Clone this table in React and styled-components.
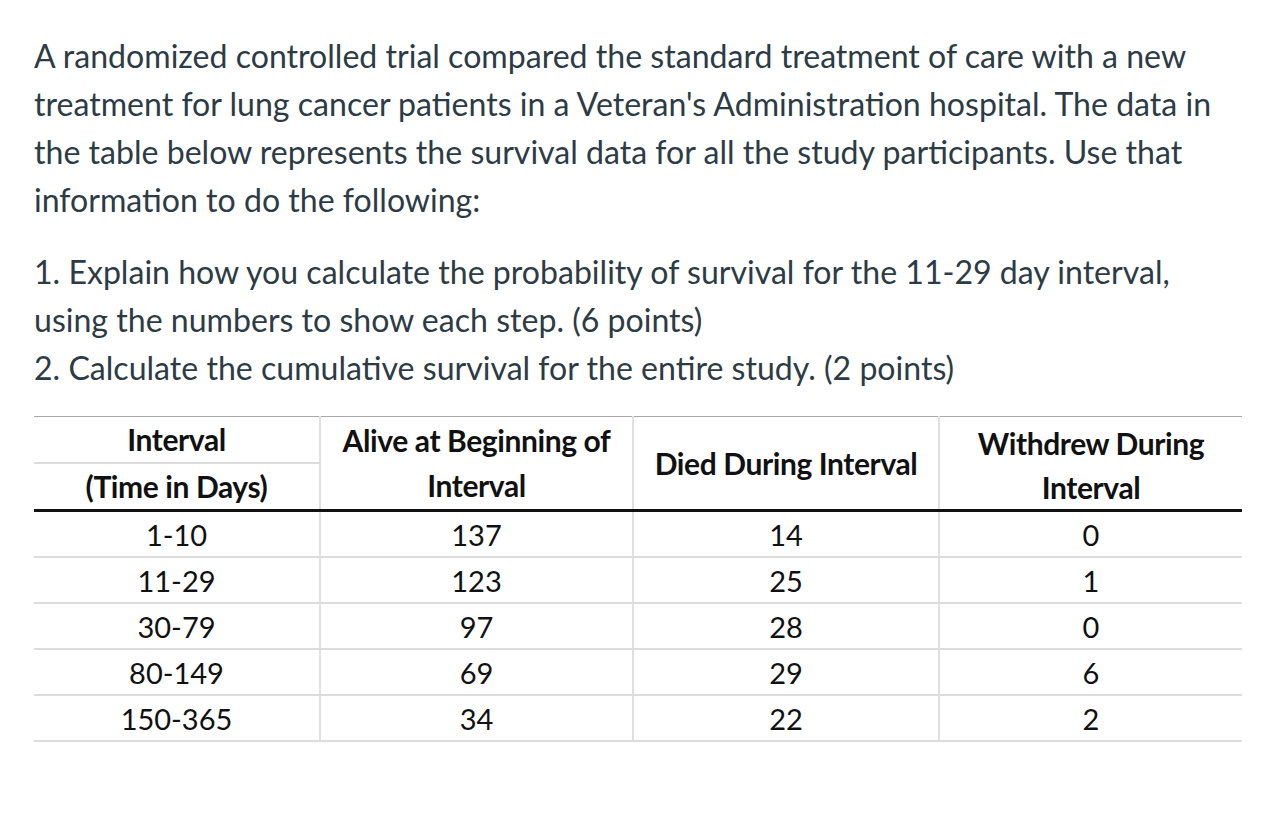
import React from "react";
import styled, { createGlobalStyle } from "styled-components";

const GlobalStyle = createGlobalStyle`
  html, body {
    margin: 0;
    padding: 0;
    background: #ffffff;
  }
`;

const rows = [
  ["1-10", "137", "14", "0"],
  ["11-29", "123", "25", "1"],
  ["30-79", "97", "28", "0"],
  ["80-149", "69", "29", "6"],
  ["150-365", "34", "22", "2"],
];

const App = () => {
  return (
    <Page>
      <GlobalStyle />
      <Text>
        A randomized controlled trial compared the standard treatment of care
        with a new treatment for lung cancer patients in a Veteran's
        Administration hospital. The data in the table below represents the
        survival data for all the study participants. Use that information to
        do the following:
      </Text>
      <Text>
        1. Explain how you calculate the probability of survival for the 11-29
        day interval, using the numbers to show each step. (6 points)
        <br />
        2. Calculate the cumulative survival for the entire study. (2 points)
      </Text>
      <Table>
        <colgroup>
          <col style={{ width: 286 }} />
          <col style={{ width: 313 }} />
          <col style={{ width: 306 }} />
          <col style={{ width: 303 }} />
        </colgroup>
        <thead>
          <tr>
            <Head>Interval</Head>
            <Head rowSpan={2}>
              Alive at Beginning of
              <br />
              Interval
            </Head>
            <Head rowSpan={2}>Died During Interval</Head>
            <Head rowSpan={2} $low>
              Withdrew During
              <br />
              Interval
            </Head>
          </tr>
          <tr>
            <Head>(Time in Days)</Head>
          </tr>
        </thead>
        <tbody>
          {rows.map((r) => (
            <tr key={r[0]}>
              {r.map((v, i) => (
                <Cell key={i}>{v}</Cell>
              ))}
            </tr>
          ))}
        </tbody>
      </Table>
    </Page>
  );
};

const Page = styled.div`
  width: 1208px;
  padding: 32px 0 0 34px;
  font-family: Lato, "Noto Sans", sans-serif;
  color: #2d3b45;
`;

const Text = styled.p`
  margin: 0 0 24px;
  font-size: 32.1px;
  line-height: 48px;
  font-feature-settings: "liga" 1;
`;

const Table = styled.table`
  margin-top: 0;
  width: 1208px;
  border-collapse: collapse;
  table-layout: fixed;
  border-top: 1px solid #a8a8a8;
  font-family: Lato, "Noto Sans", sans-serif;
  color: #111111;
  font-size: 29px;

  thead tr:first-child th {
    height: 44px;
  }
  thead tr:last-child th {
    height: 44px;
    border-bottom: 3px solid #111111;
  }
  thead tr:first-child th:first-child {
    border-bottom: 2px solid #dcdcdc;
  }
  th:first-child,
  td:first-child {
    border-left: none;
  }
`;

const Head = styled.th`
  font-weight: 700;
  font-size: 30px;
  text-align: center;
  vertical-align: middle;
  padding: ${(p) => (p.$low ? "3px 4px 0" : "0 4px")};
  line-height: ${(p) => (p.$low ? "44px" : "45px")};
  border-left: 2px solid #e0e0e0;
  border-bottom: 3px solid #111111;
  letter-spacing: -0.4px;
`;

const Cell = styled.td`
  text-align: center;
  height: 44px;
  padding: 0;
  border-left: 2px solid #e0e0e0;
  border-bottom: 2px solid #dcdcdc;
  font-weight: 400;
`;

export default App;
